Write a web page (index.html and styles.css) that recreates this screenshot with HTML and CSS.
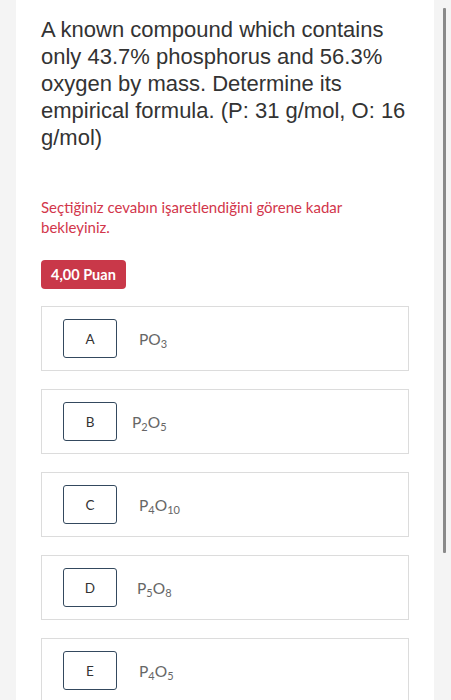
FILE: index.html
```html
<!DOCTYPE html>
<html lang="tr">
<head>
<meta charset="utf-8">
<link rel="stylesheet" href="styles.css">
</head>
<body>
<div class="page">
  <div class="side side-left"></div>
  <main class="card">
    <p class="question">A known compound which contains only 43.7% phosphorus and 56.3% oxygen by mass. Determine its empirical formula. (P: 31 g/mol, O: 16 g/mol)</p>
    <p class="notice">Seçtiğiniz cevabın işaretlendiğini görene kadar bekleyiniz.</p>
    <div class="badge">4,00 Puan</div>
    <ul class="options">
      <li class="option"><span class="letter">A</span><span class="formula">PO<sub>3</sub></span></li>
      <li class="option"><span class="letter">B</span><span class="formula f-b">P<sub>2</sub>O<sub>5</sub></span></li>
      <li class="option"><span class="letter">C</span><span class="formula">P<sub>4</sub>O<sub>10</sub></span></li>
      <li class="option"><span class="letter">D</span><span class="formula f-d">P<sub>5</sub>O<sub>8</sub></span></li>
      <li class="option"><span class="letter">E</span><span class="formula">P<sub>4</sub>O<sub>5</sub></span></li>
    </ul>
  </main>
  <div class="side side-right"><div class="thumb"></div></div>
</div>
</body>
</html>
```

FILE: styles.css
```css
* { box-sizing: border-box; }
html, body { margin: 0; padding: 0; background: #fff; }
body { width: 451px; height: 700px; overflow: hidden; }
.page { display: flex; height: 700px; }
.side { flex: none; background: #f4f4f4; }
.side-left { width: 16px; }
.side-right { width: 17px; display: flex; flex-direction: column; padding-left: 9px; padding-top: 8px; }
.thumb { width: 3px; height: 545px; background: #8a8a8a; border-radius: 1px; }
.card { flex: 1; background: #fff; padding: 16px 26px 0 25px; overflow: hidden; }
.question {
  margin: 0;
  font-family: "Liberation Sans", Arial, sans-serif;
  font-size: 22px;
  line-height: 27px;
  color: #333;
  width: 368px;
}
.notice {
  margin: 46px 0 0;
  font-family: "Lato", "Open Sans", sans-serif;
  font-size: 15px;
  line-height: 20px;
  color: #d2364b;
  width: 340px;
}
.badge {
  margin-top: 23px;
  display: inline-block;
  background: #c93849;
  color: #fff;
  font-family: "Lato", "Open Sans", sans-serif;
  font-weight: 700;
  font-size: 14.5px;
  line-height: 29px;
  height: 29px;
  padding: 0 10px;
  border-radius: 4px;
}
.options { list-style: none; margin: 17px 0 0; padding: 0; display: flex; flex-direction: column; gap: 18px; }
.option {
  height: 65px;
  width: 368px;
  border: 1px solid #dcdcdc;
  display: flex;
  align-items: center;
  padding-left: 21px;
}
.letter {
  width: 54px;
  height: 39px;
  border: 1px solid #34495e;
  border-radius: 3px;
  display: flex;
  align-items: center;
  justify-content: center;
  font-family: "Lato", "Open Sans", sans-serif;
  font-size: 13.5px;
  color: #333;
}
.formula {
  margin-left: 22px;
  font-family: "Lato", "Open Sans", sans-serif;
  font-size: 15.5px;
  color: #666;
}
.formula.f-b { margin-left: 15px; }
.formula.f-d { margin-left: 20px; }
.formula sub { font-size: 11px; vertical-align: -3px; line-height: 0; }
```
